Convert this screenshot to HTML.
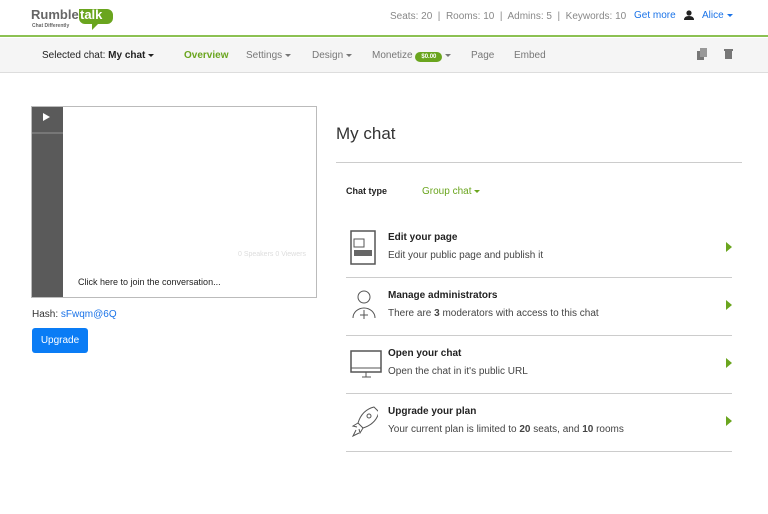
<!DOCTYPE html>
<html><head><meta charset="utf-8"><style>
*{margin:0;padding:0;box-sizing:border-box}
body{width:768px;height:514px;background:#fff;font-family:"Liberation Sans",sans-serif;position:relative;overflow:hidden;color:#333}
.a{position:absolute;white-space:nowrap}
.top{position:absolute;left:0;top:0;width:768px;height:37px;border-bottom:2px solid #8cc152}
.nav{position:absolute;left:0;top:38px;width:768px;height:35px;background:#f5f5f5;border-bottom:1px solid #ddd}
.car{display:inline-block;border-left:3px solid transparent;border-right:3px solid transparent;border-top:3px solid currentColor;vertical-align:middle;margin-left:3px}
.row{position:absolute;left:346px;width:386px;height:58px;border-bottom:1px solid #ccc}
.row b{position:absolute;left:42px;top:12px;font-size:10px;color:#222}
.row span{position:absolute;left:42px;top:30px;font-size:10px;color:#444}
.row i{position:absolute;right:0;top:22px;border-top:5px solid transparent;border-bottom:5px solid transparent;border-left:6px solid #6aa51e}
.row svg{position:absolute;left:4px;top:10px}
</style></head><body>
<div class="top">
 <div class="a" style="left:31px;top:7px;font-size:13px;font-weight:bold;color:#666">Rumble</div>
 <svg class="a" style="left:76px;top:5px" width="38" height="26"><path d="M3 4h28a6 6 0 0 1 6 6v3a6 6 0 0 1-6 6H22l-6 6v-6H9a6 6 0 0 1-6-6z" fill="#6aa51e"/></svg>
 <div class="a" style="left:80px;top:7px;font-size:13px;font-weight:bold;color:#fff">talk</div>
 <div class="a" style="left:32px;top:23px;font-size:5px;color:#666;font-weight:bold">Chat Differently</div>
 <div class="a" style="left:390px;top:11px;font-size:10px;color:#888">Seats: 20 &nbsp;|&nbsp; Rooms: 10 &nbsp;|&nbsp; Admins: 5 &nbsp;|&nbsp; Keywords: 10</div>
 <div class="a" style="left:634px;top:10px;font-size:10px;color:#1a73e8">Get more</div>
 <svg class="a" style="left:684px;top:10px" width="10" height="10"><circle cx="5" cy="3" r="2.6" fill="#222"/><path d="M0 10q0-4 5-4t5 4z" fill="#222"/></svg>
 <div class="a" style="left:702px;top:10px;font-size:10px;color:#1a73e8">Alice<span class="car"></span></div>
</div>
<div class="nav">
 <div class="a" style="left:42px;top:12px;font-size:10px;color:#222">Selected chat: <b>My chat</b><span class="car"></span></div>
 <div class="a" style="left:184px;top:12px;font-size:10px;color:#6aa51e;font-weight:bold">Overview</div>
 <div class="a" style="left:246px;top:12px;font-size:10px;color:#777">Settings<span class="car"></span></div>
 <div class="a" style="left:312px;top:12px;font-size:10px;color:#777">Design<span class="car"></span></div>
 <div class="a" style="left:372px;top:12px;font-size:10px;color:#777">Monetize <span style="background:#6aa51e;color:#fff;font-size:6px;font-weight:bold;border-radius:6px;padding:2px 6px">$0.00</span><span class="car"></span></div>
 <div class="a" style="left:471px;top:12px;font-size:10px;color:#777">Page</div>
 <div class="a" style="left:514px;top:12px;font-size:10px;color:#777">Embed</div>
 <svg class="a" style="left:697px;top:10px" width="10" height="12"><rect x="0" y="3" width="7" height="9" fill="#777"/><rect x="3" y="0" width="7" height="9" fill="#999"/></svg>
 <svg class="a" style="left:724px;top:10px" width="9" height="11"><rect x="0" y="1" width="9" height="2" fill="#777"/><rect x="1" y="3" width="7" height="8" fill="#777"/></svg>
</div>
<div class="a" style="left:31px;top:106px;width:286px;height:192px;border:1px solid #bbb;background:#fff">
 <div class="a" style="left:0;top:0;width:31px;height:190px;background:#5a5a5a"></div>
 <div class="a" style="left:0;top:25px;width:31px;height:2px;background:#777"></div>
 <div class="a" style="left:11px;top:6px;border-top:4px solid transparent;border-bottom:4px solid transparent;border-left:7px solid #fff"></div>
 <div class="a" style="left:206px;top:144px;font-size:7px;color:#ddd">0 Speakers 0 Viewers</div>
 <div class="a" style="left:46px;top:170px;font-size:9px;color:#222">Click here to join the conversation...</div>
</div>
<div class="a" style="left:32px;top:309px;font-size:10px;color:#333">Hash: <span style="color:#1a73e8">sFwqm@6Q</span></div>
<div class="a" style="left:32px;top:328px;width:56px;height:25px;background:#0a7cf5;border-radius:3px;color:#fff;font-size:10px;text-align:center;line-height:25px">Upgrade</div>
<div class="a" style="left:336px;top:124px;font-size:17px;color:#333">My chat</div>
<div class="a" style="left:336px;top:162px;width:406px;height:1px;background:#ccc"></div>
<div class="a" style="left:346px;top:186px;font-size:9px;font-weight:bold;color:#222">Chat type</div>
<div class="a" style="left:422px;top:186px;font-size:10px;color:#6aa51e">Group chat<span class="car"></span></div>
<div class="row" style="top:220px"><svg width="28" height="38"><rect x="1" y="1" width="24" height="33" fill="none" stroke="#555" stroke-width="1.5"/><rect x="4" y="9" width="10" height="8" fill="none" stroke="#555"/><rect x="4" y="20" width="18" height="6" fill="#666"/></svg><b>Edit your page</b><span>Edit your public page and publish it</span><i></i></div>
<div class="row" style="top:278px"><svg width="28" height="38"><circle cx="14" cy="9" r="6" fill="none" stroke="#555"/><path d="M3 30a11 10 0 0 1 22 0M14 22v9M10 27h8" fill="none" stroke="#555"/></svg><b>Manage administrators</b><span>There are <strong>3</strong> moderators with access to this chat</span><i></i></div>
<div class="row" style="top:336px"><svg width="34" height="38"><rect x="1" y="5" width="30" height="21" fill="none" stroke="#555" stroke-width="1.5"/><path d="M1 22h30M12 31h9M16 26v5" stroke="#555" fill="none"/></svg><b>Open your chat</b><span>Open the chat in it's public URL</span><i></i></div>
<div class="row" style="top:394px"><svg width="28" height="38"><path d="M24 3q-12 3-16 16l5 5q13-4 16-16zM8 19l-5 3 4 1M13 24l-3 5-1-4M6 26l-3 6 6-3" fill="none" stroke="#555"/><circle cx="19" cy="12" r="2" fill="none" stroke="#555"/></svg><b>Upgrade your plan</b><span>Your current plan is limited to <strong>20</strong> seats, and <strong>10</strong> rooms</span><i></i></div>
</body></html>
